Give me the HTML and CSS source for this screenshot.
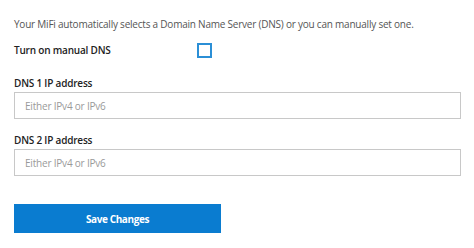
FILE: index.html
```html
<!DOCTYPE html>
<html lang="en">
<head>
    <meta charset="UTF-8">
    <meta name="viewport" content="width=device-width, initial-scale=1.0">
    <title>DNS</title>
    <link rel="stylesheet" href="styles.css">
</head>
<body>
    <div class="dns-form">
        <p class="intro">Your MiFi automatically selects a Domain Name Server (DNS) or you can manually set one.</p>

        <label class="toggle-row">
            <span class="toggle-label">Turn on manual DNS</span>
            <span class="check-box"></span>
        </label>

        <div class="field">
            <label class="field-label" for="dns1">DNS 1 IP address</label>
            <input type="text" id="dns1" class="inp-dns" placeholder="Either IPv4 or IPv6">
        </div>

        <div class="field">
            <label class="field-label" for="dns2">DNS 2 IP address</label>
            <input type="text" id="dns2" class="inp-dns" placeholder="Either IPv4 or IPv6">
        </div>

        <button class="btn-save">Save Changes</button>
    </div>
</body>
</html>
```

FILE: styles.css
```css
body{
    margin:0;
    background:#fff;
    font-family:"Open Sans", "Noto Sans", sans-serif;
    color:#333;
}

.dns-form{
    padding:17px 13px 0 14px;
    display:flex;
    flex-direction:column;
}

.intro{
    margin:0;
    font-size:10px;
    line-height:14px;
    letter-spacing:-0.22px;
    color:#555;
}

.toggle-row{
    display:flex;
    align-items:center;
    margin-top:11px;
    height:16px;
}

.toggle-label{
    width:183px;
    font-size:10px;
    font-weight:600;
    letter-spacing:-0.2px;
    color:#222;
}

.check-box{
    width:11px;
    height:11px;
    border:2px solid #2b8fd6;
}

.field{
    display:flex;
    flex-direction:column;
    margin-top:18px;
}

.field + .field{
    margin-top:14px;
}

.field-label{
    font-size:10px;
    font-weight:600;
    letter-spacing:-0.2px;
    color:#222;
    line-height:14px;
    margin-bottom:2px;
}

.inp-dns{
    box-sizing:border-box;
    width:447px;
    height:27px;
    margin:0;
    padding:0 10px;
    border:1px solid #c8c8c8;
    font-family:inherit;
    font-size:10px;
    letter-spacing:-0.2px;
    color:#333;
}

.inp-dns::placeholder{
    color:#9a9a9a;
}

.btn-save{
    width:207px;
    height:29px;
    margin-top:28px;
    border:none;
    background:#0a7cd0;
    color:#fff;
    font-family:inherit;
    font-size:10px;
    font-weight:700;
    letter-spacing:-0.4px;
}
```
